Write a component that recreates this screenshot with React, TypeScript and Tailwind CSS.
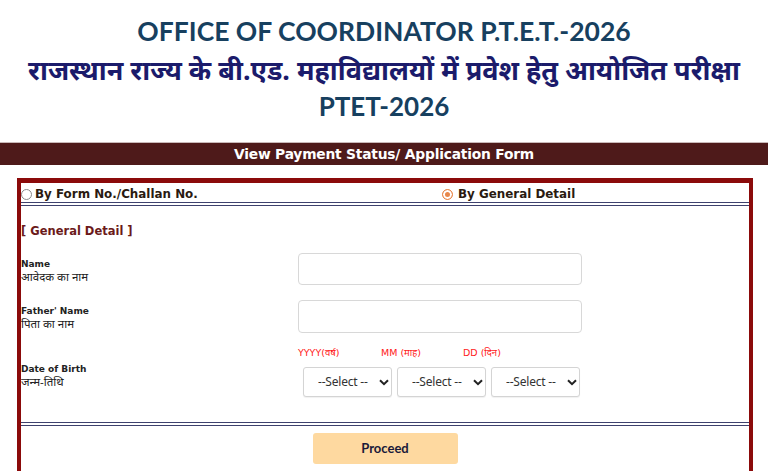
import React from 'react';

const SelectBox: React.FC = () => (
  <div className="relative w-[89px] h-[30px]">
    <select className="w-full h-full appearance-none rounded-[3px] border border-[#d4d4d4] bg-white pl-[14px] pr-[12px] text-[12px] tracking-[-0.2px] text-[#333] font-['Noto_Sans',sans-serif] shadow-[0_1px_1px_rgba(0,0,0,0.06)]">
      <option>--Select --</option>
    </select>
    <svg className="pointer-events-none absolute right-[3px] top-[12px]" width="10" height="7" viewBox="0 0 10 7">
      <path d="M1 1.2 L5 5.2 L9 1.2" fill="none" stroke="#222" strokeWidth="2" />
    </svg>
  </div>
);

const FieldLabel: React.FC<{ en: string; hi: string }> = ({ en, hi }) => (
  <div className="flex flex-col">
    <span className="text-[9px] leading-[10px] font-bold text-[#222] font-['DejaVu_Sans',sans-serif]">{en}</span>
    <span className="text-[11.5px] leading-[15px] text-[#222] font-['Noto_Sans','DejaVu_Sans',sans-serif]">{hi}</span>
  </div>
);

const radioClass =
  "m-0 w-[11px] h-[11px] appearance-none rounded-full border border-[#8a8a8a] bg-white checked:border-[#e8874a] checked:bg-[#e8874a] checked:shadow-[inset_0_0_0_2px_white]";

const App: React.FC = () => {
  return (
    <div className="w-[768px] h-[471px] overflow-hidden bg-white">
      <div className="flex flex-col items-center pt-[13px]">
        <h1 className="text-[26.5px] leading-[37px] font-bold text-[#17405f] font-['Lato',sans-serif]">
          OFFICE OF COORDINATOR P.T.E.T.-2026
        </h1>
        <h2 className="text-[27px] leading-[39px] font-bold text-[#1b1b6b] font-['Noto_Sans','Noto_Sans_Devanagari',sans-serif] whitespace-nowrap">
          राजस्थान राज्य के बी.एड. महाविद्यालयों में प्रवेश हेतु आयोजित परीक्षा
        </h2>
        <h3 className="text-[26px] leading-[35px] font-bold text-[#17405f] font-['Lato',sans-serif]">PTET-2026</h3>
      </div>

      <div className="mt-[18px] h-[23px] bg-[#4e1a1a] border-t border-[#c9b9b9] flex items-center justify-center">
        <span className="text-[13.8px] font-bold text-white font-['DejaVu_Sans',sans-serif] tracking-[-0.2px]">
          View Payment Status/ Application Form
        </span>
      </div>

      <div className="ml-[17px] mt-[13px] w-[736px] border-t-[5px] border-l-[4px] border-r-[4px] border-[#8b0a0a] h-[300px]">
        <div className="flex items-center h-[19px] pt-[4px] text-[11.9px] font-bold text-[#2a1a10] font-['DejaVu_Sans',sans-serif]">
          <label className="flex items-center gap-[3px] w-[421px]">
            <input type="radio" name="mode" className={radioClass} />
            By Form No./Challan No.
          </label>
          <label className="flex items-center gap-[5px]">
            <input type="radio" name="mode" defaultChecked className={radioClass} />
            By General Detail
          </label>
        </div>
        <div className="border-t-[4px] border-double border-[#3d416e]" />

        <div className="pt-[17px] text-[11.5px] font-bold text-[#6b1a1a] font-['DejaVu_Sans',sans-serif]">[ General Detail ]</div>

        <div className="grid grid-cols-[277px_284px] mt-[13px]">
          <div className="pt-[6px]">
            <FieldLabel en="Name" hi="आवेदक का नाम" />
          </div>
          <input className="h-[32px] rounded-[4px] border border-[#d8d8d8] bg-white" />

          <div className="pt-[6px] mt-[15px]">
            <FieldLabel en="Father' Name" hi="पिता का नाम" />
          </div>
          <input className="h-[33px] mt-[15px] rounded-[4px] border border-[#d8d8d8] bg-white" />

          <div className="pt-[31px]">
            <FieldLabel en="Date of Birth" hi="जन्म-तिथि" />
          </div>
          <div className="mt-[14px]">
            <div className="flex text-[9.5px] text-[#ff2020] font-['DejaVu_Sans','Noto_Sans',sans-serif] h-[12px] items-center">
              <span className="w-[83px]">YYYY(वर्ष)</span>
              <span className="w-[82px]">MM (माह)</span>
              <span>DD (दिन)</span>
            </div>
            <div className="flex gap-[5px] mt-[8px] ml-[5px]">
              <SelectBox />
              <SelectBox />
              <SelectBox />
            </div>
          </div>
        </div>

        <div className="mt-[25px] border-t-[4px] border-double border-[#3d416e]" />
        <div className="flex justify-center pt-[7px]">
          <button className="w-[145px] h-[31px] rounded-[3px] bg-[#fed9a0] text-[13px] font-bold text-[#1a1a3a] font-['Lato',sans-serif]">
            Proceed
          </button>
        </div>
      </div>
    </div>
  );
};

export default App;
